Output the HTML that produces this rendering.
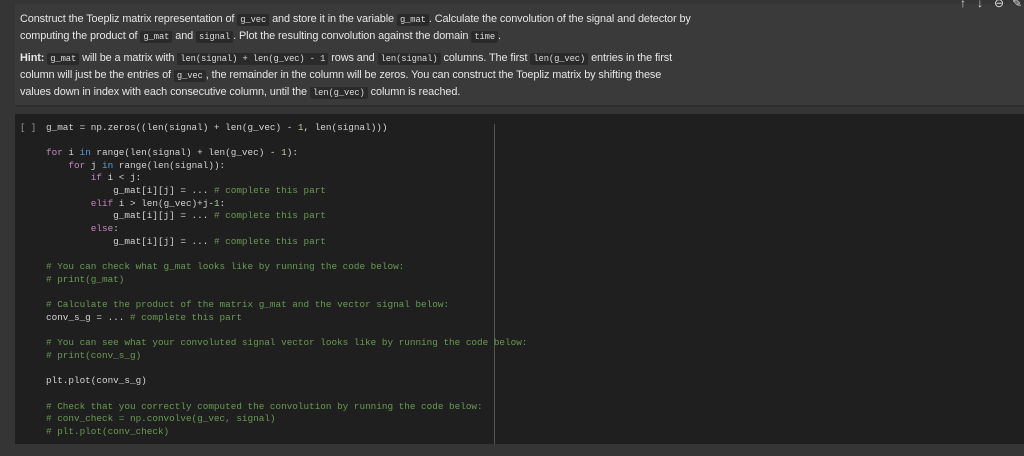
<!DOCTYPE html>
<html><head><meta charset="utf-8"><style>
body{margin:0;width:1024px;height:456px;background:#353535;overflow:hidden;position:relative;font-family:"Liberation Sans",sans-serif}
.md{position:absolute;left:15px;top:4px;width:1009px;height:101px;background:#3a3a3a;border-bottom:2px solid #2e2e2e}
.t{position:absolute;left:5px;font-size:10.9px;color:#e6e6e6;white-space:nowrap;letter-spacing:-0.1px}
.t code{font-family:"Liberation Mono",monospace;font-size:8.8px;background:#2a2a2a;padding:1px 3px;border-radius:2px;color:#ddd}
.code{position:absolute;left:15px;top:114px;width:1009px;height:330px;background:#1f1f1f}
.ruler{position:absolute;left:479px;top:10px;width:1px;height:320px;background:#555}
.c{position:absolute;left:31px;font-family:"Liberation Mono",monospace;font-size:9.33px;color:#d4d4d4;white-space:pre}
.k{color:#c586c0}.b{color:#569cd6}.g{color:#6a9955}.n{color:#b5cea8}
.br{position:absolute;left:5px;top:9px;font-family:"Liberation Mono",monospace;font-size:9px;color:#999}
.ic{position:absolute;top:-3px;color:#ddd;font-size:12px}
</style></head><body>
<div class="md">
<div class="t" style="top:9px">Construct the Toepliz matrix representation of <code>g_vec</code> and store it in the variable <code>g_mat</code>. Calculate the convolution of the signal and detector by</div>
<div class="t" style="top:26px">computing the product of <code>g_mat</code> and <code>signal</code>. Plot the resulting convolution against the domain <code>time</code>.</div>
<div class="t" style="top:48px"><b>Hint:</b> <code>g_mat</code> will be a matrix with <code>len(signal) + len(g_vec) - 1</code> rows and <code>len(signal)</code> columns. The first <code>len(g_vec)</code> entries in the first</div>
<div class="t" style="top:65px">column will just be the entries of <code>g_vec</code>, the remainder in the column will be zeros. You can construct the Toepliz matrix by shifting these</div>
<div class="t" style="top:82px">values down in index with each consecutive column, until the <code>len(g_vec)</code> column is reached.</div>
</div>
<div class="ic" style="left:960px;top:-4px">↑</div><div class="ic" style="left:977px;top:-4px">↓</div><div class="ic" style="left:994px;top:-4px">⊖</div><div class="ic" style="left:1012px;top:-4px">✎</div>
<div class="code">
<div class="ruler"></div>
<div class="br">[ ]</div>
<div class="c" style="top:8px">g_mat = np.zeros((len(signal) + len(g_vec) - <span class="n">1</span>, len(signal)))</div>
<div class="c" style="top:33px"><span class="k">for</span> i <span class="b">in</span> range(len(signal) + len(g_vec) - <span class="n">1</span>):</div>
<div class="c" style="top:46px">    <span class="k">for</span> j <span class="b">in</span> range(len(signal)):</div>
<div class="c" style="top:58px">        <span class="k">if</span> i &lt; j:</div>
<div class="c" style="top:71px">            g_mat[i][j] = ... <span class="g"># complete this part</span></div>
<div class="c" style="top:84px">        <span class="k">elif</span> i &gt; len(g_vec)+j-<span class="n">1</span>:</div>
<div class="c" style="top:96px">            g_mat[i][j] = ... <span class="g"># complete this part</span></div>
<div class="c" style="top:109px">        <span class="k">else</span>:</div>
<div class="c" style="top:122px">            g_mat[i][j] = ... <span class="g"># complete this part</span></div>
<div class="c g" style="top:147px"># You can check what g_mat looks like by running the code below:</div>
<div class="c g" style="top:160px"># print(g_mat)</div>
<div class="c g" style="top:185px"># Calculate the product of the matrix g_mat and the vector signal below:</div>
<div class="c" style="top:198px">conv_s_g = ... <span class="g"># complete this part</span></div>
<div class="c g" style="top:223px"># You can see what your convoluted signal vector looks like by running the code below:</div>
<div class="c g" style="top:236px"># print(conv_s_g)</div>
<div class="c" style="top:261px">plt.plot(conv_s_g)</div>
<div class="c g" style="top:287px"># Check that you correctly computed the convolution by running the code below:</div>
<div class="c g" style="top:299px"># conv_check = np.convolve(g_vec, signal)</div>
<div class="c g" style="top:312px"># plt.plot(conv_check)</div>
</div>
</body></html>
